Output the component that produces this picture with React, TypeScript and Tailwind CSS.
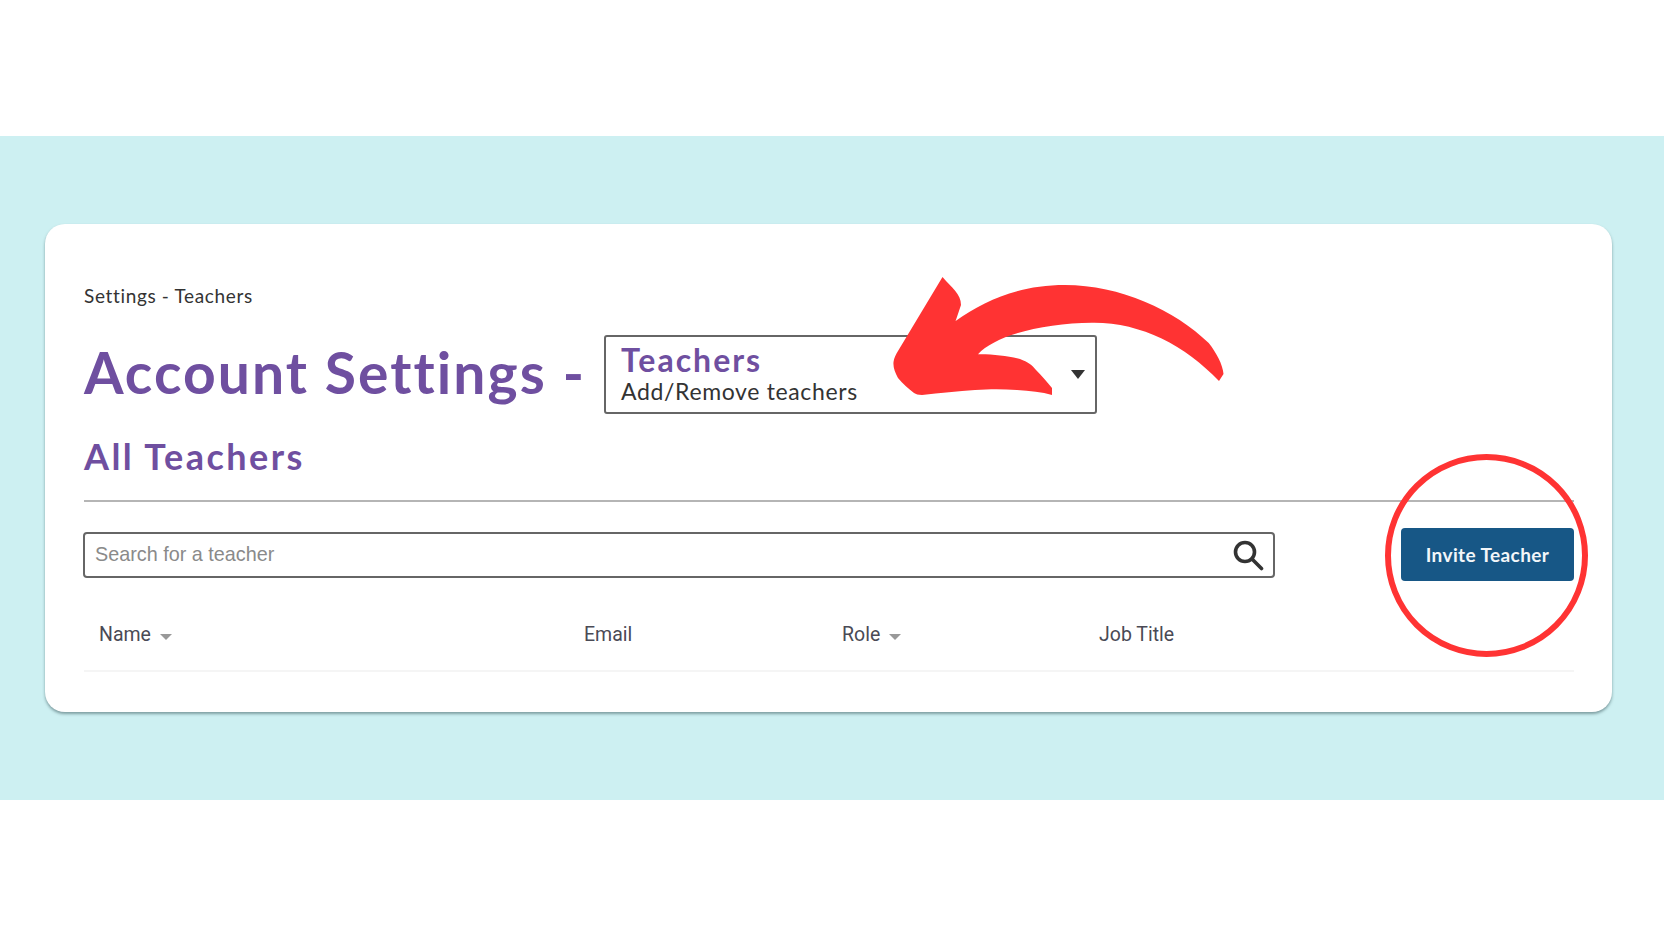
export default function App() {
  const display = "font-['Lato','Noto_Sans',sans-serif]";
  return (
    <div className="relative h-[936px] w-[1664px] overflow-hidden bg-white">
      <div className="h-[136px]" />
      <div className="h-[664px] bg-[#cdf0f2] px-[45px] pt-[88px]">
        <div className={`h-[488px] w-[1567px] rounded-[20px] bg-white pt-[60px] pr-[38px] pl-[39px] shadow-[0_2px_3px_rgba(60,90,95,0.55)] ${display}`}>
          <div className="h-6 text-[19px] leading-6 tracking-[0.65px] text-[#333]">Settings - Teachers</div>
          <div className="mt-[27px] flex h-[79px] items-center">
            <h1 className="-mt-[5px] w-[520px] text-[57px] leading-none font-bold tracking-[2.05px] text-[#6f4fa0]">Account Settings -</h1>
            <div className="flex h-[79px] w-[493px] items-center justify-between rounded-[3px] border-2 border-[#666] pr-[10px] pl-[15px]">
              <div>
                <div className="text-[32px] leading-[30px] font-bold tracking-[2px] text-[#6f4fa0]">Teachers</div>
                <div className="mt-[4px] text-[23px] leading-[25px] tracking-[0.65px] text-[#333]">Add/Remove teachers</div>
              </div>
              <div className="h-0 w-0 border-x-[7px] border-t-[9px] border-x-transparent border-t-[#333]" />
            </div>
          </div>
          <h2 className="mt-[19px] h-[46px] text-[36px] leading-[46px] font-bold tracking-[2.45px] text-[#6f4fa0]">All Teachers</h2>
          <div className="mt-[21px] h-[2px] bg-[#b5b5b5]" />
          <div className="mt-[26px] flex h-[53px] items-center justify-between">
            <div className="flex h-[46px] w-[1192px] items-center justify-between rounded-[4px] border-2 border-[#666] pr-[9px] pl-[10px] -ml-[1px]">
              <span className="font-['Liberation_Sans',sans-serif] text-[19.8px] text-[#8a8a8a]">Search for a teacher</span>
              <svg width="32" height="32" viewBox="0 0 32 32" fill="none" stroke="#333" strokeWidth="3.6">
                <circle cx="13" cy="13" r="9.5" />
                <path d="M20 20 L29.5 29.5" strokeLinecap="round" />
              </svg>
            </div>
            <button className="h-[53px] w-[173px] rounded-[4px] bg-[#175786] pt-[2px] text-[19px] font-bold tracking-[0.4px] text-[#f2f6f9]">Invite Teacher</button>
          </div>
          <div className="mt-[19px] flex h-[72px] items-center border-b-2 border-[#f5f5f5] font-['Roboto',sans-serif] text-[19.5px] text-[#4a4a55]">
            <div className="flex w-[500px] items-center gap-[9px] pl-[15px]">
              <span>Name</span>
              <span className="mt-[3px] h-0 w-0 border-x-[6px] border-t-[6px] border-x-transparent border-t-[#999]" />
            </div>
            <div className="w-[258px]">Email</div>
            <div className="flex w-[257px] items-center gap-[9px]">
              <span>Role</span>
              <span className="mt-[3px] h-0 w-0 border-x-[6px] border-t-[6px] border-x-transparent border-t-[#999]" />
            </div>
            <div>Job Title</div>
          </div>
        </div>
      </div>
      <svg className="absolute top-0 left-0" width="1664" height="936" viewBox="0 0 1664 936" fill="none">
        <path
          fill="#ff3333"
          d="M942.5 277 C952 288 961 294 961 305 L955.6 321 C985 300 1020 285 1065 285 C1120 285 1175 310 1208.7 343 C1216 352 1223 365 1223.5 374 L1219 381 C1185 345 1140 322 1092 322.7 C1045 323 995 335 978 354.3 C992 354 1008 356 1020 359 C1028 362 1032 365 1036 370 C1042 376 1047 382 1052 388 L1052 395 C1042 392 1030 391 1017 390 C1003 389 990 389 975 390 C958 391 940 393 922 395 C918 395 916 394 914 393 C908 388 903 384 898 378 C895 372 893 368 893.5 362 C894 358 896 354 898 351 Z"
        />
        <circle cx="1486.5" cy="555.5" r="98.5" stroke="#ff3333" strokeWidth="6" />
      </svg>
    </div>
  );
}
